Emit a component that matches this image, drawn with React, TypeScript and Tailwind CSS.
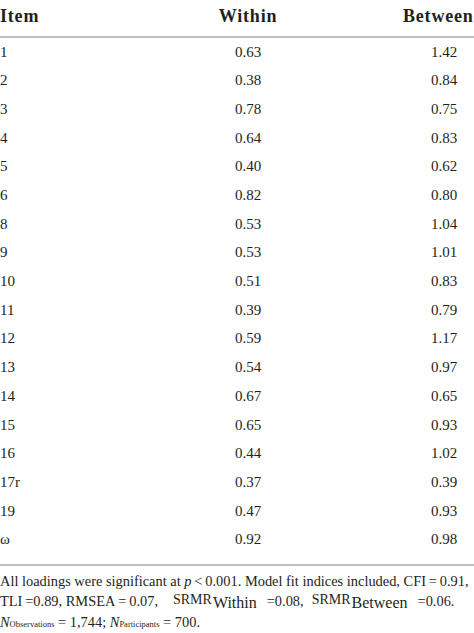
import React from "react";

const rows: [string, string, string][] = [
  ["1", "0.63", "1.42"],
  ["2", "0.38", "0.84"],
  ["3", "0.78", "0.75"],
  ["4", "0.64", "0.83"],
  ["5", "0.40", "0.62"],
  ["6", "0.82", "0.80"],
  ["8", "0.53", "1.04"],
  ["9", "0.53", "1.01"],
  ["10", "0.51", "0.83"],
  ["11", "0.39", "0.79"],
  ["12", "0.59", "1.17"],
  ["13", "0.54", "0.97"],
  ["14", "0.67", "0.65"],
  ["15", "0.65", "0.93"],
  ["16", "0.44", "1.02"],
  ["17r", "0.37", "0.39"],
  ["19", "0.47", "0.93"],
  ["ω", "0.92", "0.98"],
];

export default function App() {
  return (
    <div
      className="w-[474px] h-[633px] overflow-hidden bg-white text-[#231f20]"
      style={{ fontFamily: '"Liberation Serif", serif' }}
    >
      <div className="w-[542px]">
        <div className="grid grid-cols-[150px_196px_196px] h-[38px] items-start pt-[3px] border-b-2 border-[#bdbdbd] font-bold text-[18px] tracking-[0.8px]">
          <div>Item</div>
          <div className="text-center">Within</div>
          <div className="pl-[57px] whitespace-nowrap">Between</div>
        </div>
        <div className="mt-[-0.5px] pb-[10px] border-b-2 border-[#bdbdbd]">
          {rows.map((r) => (
            <div
              key={r[0]}
              className="grid grid-cols-[150px_196px_196px] h-[28.7px] items-center text-[15px]"
            >
              <div>{r[0]}</div>
              <div className="text-center">{r[1]}</div>
              <div className="text-center">{r[2]}</div>
            </div>
          ))}
        </div>
      </div>
      <div className="mt-[5px] text-[14.4px] leading-[20.5px] whitespace-nowrap">
        <div>
          All loadings were significant at <i>p</i>&#8201;&lt;&#8201;0.001. Model fit indices included, CFI&#8201;=&#8201;0.91,
        </div>
        <div className="flex items-baseline h-[21px]">
          <span>TLI&#8201;=0.89, RMSEA&#8201;=&#8201;0.07,</span>
          <span className="relative top-[-2px] text-[14px] ml-[15px]">SRMR</span>
          <span className="relative top-[2px] text-[16px] ml-[1px]">Within</span>
          <span className="ml-[10px]">=0.08,</span>
          <span className="relative top-[-2px] text-[14px] ml-[8px]">SRMR</span>
          <span className="relative top-[2px] text-[16px] ml-[1px]">Between</span>
          <span className="ml-[10px]">=0.06.</span>
        </div>
        <div>
          <i>N</i>
          <span className="text-[8.5px]">Observations</span> = 1,744; <i>N</i>
          <span className="text-[8.5px]">Participants</span> = 700.
        </div>
      </div>
    </div>
  );
}
